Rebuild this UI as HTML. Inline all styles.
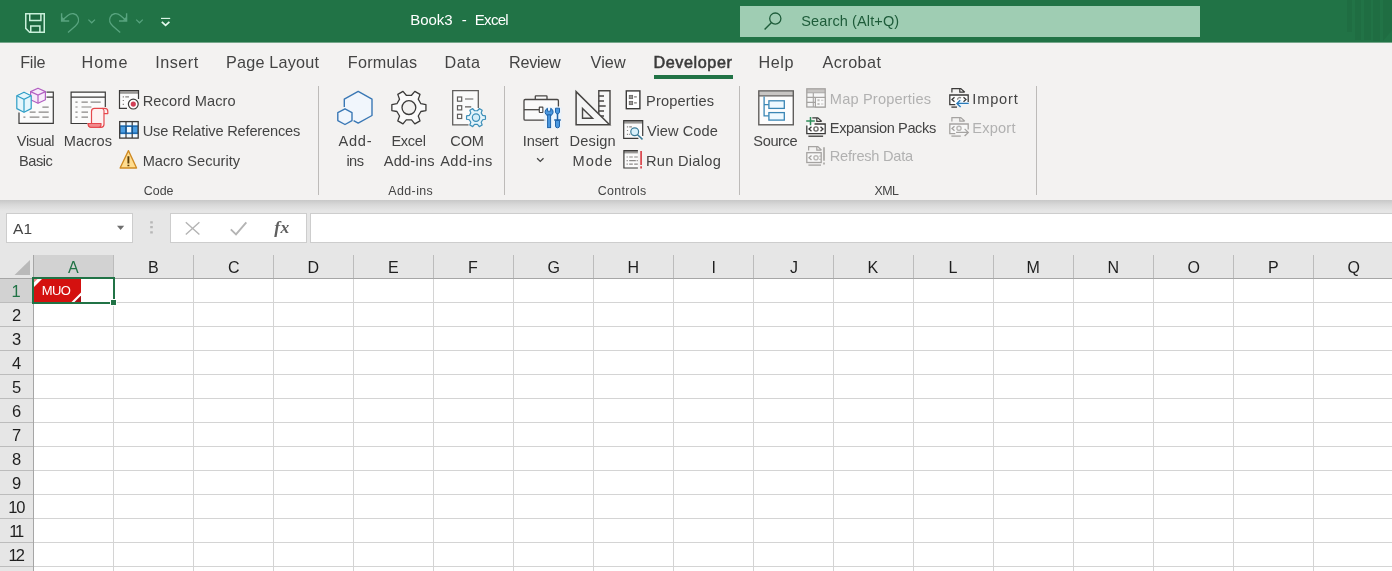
<!DOCTYPE html>
<html lang="en">
<head>
<meta charset="utf-8">
<title>Book3 - Excel</title>
<style>
html,body{margin:0;padding:0;}
body{width:1392px;height:571px;overflow:hidden;position:relative;background:#e6e6e6;font-family:"Liberation Sans",sans-serif;}
.a{position:absolute;}
.t{position:absolute;white-space:pre;line-height:1;}
.i{position:absolute;overflow:visible;}
#title{left:0;top:0;width:1392px;height:42px;background:#217346;}
#search{left:740px;top:6px;width:460px;height:31px;background:#9fcdb3;}
#ribbon{left:0;top:42px;width:1392px;height:158px;background:#f3f2f1;}
#tedge{left:0;top:42px;width:1392px;height:1px;background:#75a68a;}
#shadow{left:0;top:200px;width:1392px;height:11px;background:linear-gradient(#c8c8c8,#d9d9d9 45%,#e6e6e6);}
.sep{position:absolute;top:86px;width:1px;height:109px;background:#bdbbb9;}
#devline{left:654px;top:75px;width:79px;height:4px;background:#217346;}
.box{position:absolute;top:213px;height:28px;background:#fff;border:1px solid #cdcdcd;}
#sheet{left:34px;top:279px;width:1358px;height:292px;background:#fff;}
#grid{left:0;top:254px;}
</style>
</head>
<body>
<div class="a" id="title"></div>
<div class="a" id="search"></div>
<div class="a" id="ribbon"></div>
<div class="a" id="tedge"></div>
<div class="a" id="shadow"></div>
<div class="a" id="devline"></div>
<div class="sep" style="left:318px"></div>
<div class="sep" style="left:504px"></div>
<div class="sep" style="left:739px"></div>
<div class="sep" style="left:1036px"></div>
<div class="box" style="left:6px;width:125px"></div>
<div class="box" style="left:170px;width:135px"></div>
<div class="box" style="left:310px;width:1090px"></div>
<div class="a" id="sheet"></div>
<svg class="a" id="grid" width="1392" height="317" viewBox="0 254 1392 317" shape-rendering="crispEdges">
<rect x="34" y="255" width="79" height="23" fill="#d2d2d2"/>
<rect x="0" y="279" width="33" height="23" fill="#d2d2d2"/>
<rect x="113" y="255" width="1" height="23" fill="#bcbcbc"/>
<rect x="113" y="279" width="1" height="292" fill="#d4d4d4"/>
<rect x="193" y="255" width="1" height="23" fill="#bcbcbc"/>
<rect x="193" y="279" width="1" height="292" fill="#d4d4d4"/>
<rect x="273" y="255" width="1" height="23" fill="#bcbcbc"/>
<rect x="273" y="279" width="1" height="292" fill="#d4d4d4"/>
<rect x="353" y="255" width="1" height="23" fill="#bcbcbc"/>
<rect x="353" y="279" width="1" height="292" fill="#d4d4d4"/>
<rect x="433" y="255" width="1" height="23" fill="#bcbcbc"/>
<rect x="433" y="279" width="1" height="292" fill="#d4d4d4"/>
<rect x="513" y="255" width="1" height="23" fill="#bcbcbc"/>
<rect x="513" y="279" width="1" height="292" fill="#d4d4d4"/>
<rect x="593" y="255" width="1" height="23" fill="#bcbcbc"/>
<rect x="593" y="279" width="1" height="292" fill="#d4d4d4"/>
<rect x="673" y="255" width="1" height="23" fill="#bcbcbc"/>
<rect x="673" y="279" width="1" height="292" fill="#d4d4d4"/>
<rect x="753" y="255" width="1" height="23" fill="#bcbcbc"/>
<rect x="753" y="279" width="1" height="292" fill="#d4d4d4"/>
<rect x="833" y="255" width="1" height="23" fill="#bcbcbc"/>
<rect x="833" y="279" width="1" height="292" fill="#d4d4d4"/>
<rect x="913" y="255" width="1" height="23" fill="#bcbcbc"/>
<rect x="913" y="279" width="1" height="292" fill="#d4d4d4"/>
<rect x="993" y="255" width="1" height="23" fill="#bcbcbc"/>
<rect x="993" y="279" width="1" height="292" fill="#d4d4d4"/>
<rect x="1073" y="255" width="1" height="23" fill="#bcbcbc"/>
<rect x="1073" y="279" width="1" height="292" fill="#d4d4d4"/>
<rect x="1153" y="255" width="1" height="23" fill="#bcbcbc"/>
<rect x="1153" y="279" width="1" height="292" fill="#d4d4d4"/>
<rect x="1233" y="255" width="1" height="23" fill="#bcbcbc"/>
<rect x="1233" y="279" width="1" height="292" fill="#d4d4d4"/>
<rect x="1313" y="255" width="1" height="23" fill="#bcbcbc"/>
<rect x="1313" y="279" width="1" height="292" fill="#d4d4d4"/>
<rect x="1393" y="255" width="1" height="23" fill="#bcbcbc"/>
<rect x="1393" y="279" width="1" height="292" fill="#d4d4d4"/>
<rect x="0" y="302" width="33" height="1" fill="#bcbcbc"/>
<rect x="34" y="302" width="1358" height="1" fill="#d4d4d4"/>
<rect x="0" y="326" width="33" height="1" fill="#bcbcbc"/>
<rect x="34" y="326" width="1358" height="1" fill="#d4d4d4"/>
<rect x="0" y="350" width="33" height="1" fill="#bcbcbc"/>
<rect x="34" y="350" width="1358" height="1" fill="#d4d4d4"/>
<rect x="0" y="374" width="33" height="1" fill="#bcbcbc"/>
<rect x="34" y="374" width="1358" height="1" fill="#d4d4d4"/>
<rect x="0" y="398" width="33" height="1" fill="#bcbcbc"/>
<rect x="34" y="398" width="1358" height="1" fill="#d4d4d4"/>
<rect x="0" y="422" width="33" height="1" fill="#bcbcbc"/>
<rect x="34" y="422" width="1358" height="1" fill="#d4d4d4"/>
<rect x="0" y="446" width="33" height="1" fill="#bcbcbc"/>
<rect x="34" y="446" width="1358" height="1" fill="#d4d4d4"/>
<rect x="0" y="470" width="33" height="1" fill="#bcbcbc"/>
<rect x="34" y="470" width="1358" height="1" fill="#d4d4d4"/>
<rect x="0" y="494" width="33" height="1" fill="#bcbcbc"/>
<rect x="34" y="494" width="1358" height="1" fill="#d4d4d4"/>
<rect x="0" y="518" width="33" height="1" fill="#bcbcbc"/>
<rect x="34" y="518" width="1358" height="1" fill="#d4d4d4"/>
<rect x="0" y="542" width="33" height="1" fill="#bcbcbc"/>
<rect x="34" y="542" width="1358" height="1" fill="#d4d4d4"/>
<rect x="0" y="566" width="33" height="1" fill="#bcbcbc"/>
<rect x="34" y="566" width="1358" height="1" fill="#d4d4d4"/>
<rect x="0" y="278" width="1392" height="1" fill="#a6a6a6"/>
<rect x="33" y="255" width="1" height="316" fill="#a6a6a6"/>
<polygon points="30,260 30,275 14.5,275" fill="#b9b9b9" shape-rendering="auto"/>
<rect x="34" y="277" width="80" height="2" fill="#217346"/>
<rect x="32" y="279" width="2" height="24" fill="#217346"/>
<rect x="34" y="279" width="47" height="23" fill="#d4110f"/>
<g shape-rendering="auto"><polygon points="34,279 42,279 34,287" fill="#fff"/><polygon points="34,279 37.5,279 34,282.5" fill="#e88"/><polygon points="74.5,302 81,302 81,295.5" fill="#a80f14"/><polygon points="71.5,302 74.5,302 81,295.5 81,292.5" fill="#fff"/></g>
<rect x="33" y="278" width="81" height="25" fill="none" stroke="#217346" stroke-width="2"/>
<rect x="110" y="299" width="7" height="7" fill="#fff"/>
<rect x="111" y="300" width="5" height="5" fill="#217346"/>
</svg>
<svg class="i" style="left:24px;top:12px" width="22" height="22" viewBox="24 12 22 22">
<path d="M25.75,13.75H44.25V32.25H29.6L25.75,28.4Z" fill="#1d6840" stroke="#c9f0da" stroke-width="1.5" stroke-linejoin="miter"/>
<path d="M29.75,13.75V20.6H40.9V13.75M30.75,32.25V26.1H39.9V32.25" fill="none" stroke="#c9f0da" stroke-width="1.5"/>
</svg>
<svg class="i" style="left:60px;top:12px" width="36" height="22" viewBox="60 12 36 22">
<path d="M61.6,13.2V21H69.2" fill="none" stroke="#58a47f" stroke-width="1.4"/>
<path d="M61.6,21L62.2,17 65.5,20.6Z" fill="#58a47f"/>
<path d="M62,20.6L67.8,15.4C71.5,12.4 76.4,13.4 78,17.2C79.4,20.6 78,23.6 75.4,26L68,32.6" fill="none" stroke="#58a47f" stroke-width="1.3"/>
<path d="M88.4,19.6L91.7,22.8 95,19.6" fill="none" stroke="#58a47f" stroke-width="1.2"/>
</svg>
<svg class="i" style="left:108px;top:12px" width="36" height="22" viewBox="108 12 36 22">
<path d="M126.6,13.2V21H119" fill="none" stroke="#58a47f" stroke-width="1.4"/>
<path d="M126.6,21L126,17 122.7,20.6Z" fill="#58a47f"/>
<path d="M126.2,20.6L120.4,15.4C116.7,12.4 111.8,13.4 110.2,17.2C108.8,20.6 110.2,23.6 112.8,26L120.2,32.6" fill="none" stroke="#58a47f" stroke-width="1.3"/>
<path d="M136.2,19.6L139.5,22.8 142.8,19.6" fill="none" stroke="#58a47f" stroke-width="1.2"/>
</svg>
<svg class="i" style="left:160px;top:16px" width="12" height="12" viewBox="160 16 12 12">
<path d="M161,18.4H170.2" fill="none" stroke="#e4fbee" stroke-width="1.1"/>
<path d="M161.8,21.8L165.6,25.4 169.4,21.8" fill="none" stroke="#e4fbee" stroke-width="1.7"/>
</svg>
<svg class="i" style="left:763px;top:11px" width="20" height="20" viewBox="763 11 20 20">
<circle cx="775.3" cy="18.6" r="5.6" fill="none" stroke="#1e5c3a" stroke-width="1.3"/>
<path d="M771.3,22.7L764.6,29.6" fill="none" stroke="#1e5c3a" stroke-width="1.4"/>
</svg>
<svg class="i" style="left:14px;top:86px" width="42" height="40" viewBox="14 86 42 40">
<path d="M47,92.2H53.3V123.4H19V113" fill="#fafafa" stroke="none"/>
<rect x="19" y="92.2" width="34.3" height="31.2" fill="#fbfbfb"/>
<path d="M46.5,92.2H53.3V123.4H19V112.5M46.5,97.2H53.3" fill="none" stroke="#3b3a39" stroke-width="1.2"/>
<path d="M42.4,107.1H48.7M29.7,112.2H35.6M38.6,112.2H48.7M23.4,117.1H25.4M29.7,117.1H39.4M42.4,117.1H48.7" fill="none" stroke="#8a8886" stroke-width="1.3"/>
<path d="M38,88.2L45.4,91.6V99.8L38,103.3L30.6,99.8V91.6Z" fill="#f7eafa" stroke="#b25fc2" stroke-width="1.2" stroke-linejoin="round"/>
<path d="M30.6,91.6L38,95L45.4,91.6M38,95V103.3" fill="none" stroke="#b25fc2" stroke-width="1.2"/>
<path d="M24,92.2L31.2,95.8V108.6L24,112.3L16.8,108.6V95.8Z" fill="#e6f6fc" stroke="#2f9ec6" stroke-width="1.2" stroke-linejoin="round"/>
<path d="M16.8,95.8L24,99.4L31.2,95.8M24,99.4V112.3" fill="none" stroke="#2f9ec6" stroke-width="1.2"/>
</svg>
<svg class="i" style="left:68px;top:88px" width="44" height="42" viewBox="68 88 44 42">
<rect x="71.1" y="92.2" width="34.2" height="31.3" fill="#fbfbfb"/>
<path d="M87.5,123.5H71.1V92.2H105.3V107M71.1,97.2H105.3" fill="none" stroke="#3b3a39" stroke-width="1.2"/>
<path d="M75.4,102.1H77.6M81.5,102.1H87.8M90.6,102.1H100.7M75.4,107H77.6M81.5,107H91.4M75.4,112.2H77.6M81.5,112.2H88M75.4,117.2H77.6M81.5,117.2H88" fill="none" stroke="#8a8886" stroke-width="1.2"/>
<path d="M91.5,123.5V111.4Q91.5,108.4 94.5,108.4H104.8Q107.8,108.4 107.8,111.4V113.6H104V124.3Q104,127.3 101,127.3H91Q88.2,127.3 88.2,123.5Z" fill="#fdf1f1" stroke="#e5484d" stroke-width="1.2" stroke-linejoin="round"/>
<path d="M104,113.6V110.8Q104,108.6 102,108.4" fill="none" stroke="#e5484d" stroke-width="1.1"/>
<path d="M88.2,123.5H101V125Q101,127.3 98.5,127.3H91Q88.2,127.3 88.2,123.5Z" fill="#f28a8d" stroke="#e5484d" stroke-width="1.1"/>
</svg>
<svg class="i" style="left:117px;top:88px" width="24" height="24" viewBox="117 88 24 24">
<rect x="119.5" y="90.5" width="19" height="18" fill="#fbfbfb"/>
<rect x="119.5" y="90.8" width="19" height="3" fill="#9a9896"/>
<path d="M127,108.4H119.5V90.5H138.5V99" fill="none" stroke="#3b3a39" stroke-width="1.2"/>
<path d="M122.7,96.8H124M125.3,96.8H129M122.7,100.5H124M122.7,104.3H124" fill="none" stroke="#8a8886" stroke-width="1.2"/>
<circle cx="133.3" cy="104.1" r="4.9" fill="#fff" stroke="#3b3a39" stroke-width="1.2"/>
<circle cx="133.3" cy="104.1" r="2.6" fill="#d13f57"/>
</svg>
<svg class="i" style="left:117px;top:119px" width="24" height="22" viewBox="117 119 24 22">
<rect x="119.7" y="121.6" width="18.5" height="16.5" fill="#f2faff"/>
<rect x="119.7" y="125.3" width="18.5" height="8.8" fill="#1f6db3"/>
<rect x="120.6" y="127" width="4.6" height="5.4" fill="#4b9ee2"/>
<rect x="126.8" y="127" width="4.6" height="5.4" fill="#f2faff"/>
<rect x="133" y="127" width="4.6" height="5.4" fill="#4b9ee2"/>
<path d="M126,121.6V125.3M132.2,121.6V125.3M126,134.1V138.1M132.2,134.1V138.1" fill="none" stroke="#3b3a39" stroke-width="1.2"/>
<path d="M126,125.3V134.1M132.2,125.3V134.1" fill="none" stroke="#1a4c7c" stroke-width="1.2"/>
<rect x="119.7" y="121.6" width="18.5" height="16.5" fill="none" stroke="#3b3a39" stroke-width="1.3"/>
</svg>
<svg class="i" style="left:117px;top:148px" width="24" height="23" viewBox="117 148 24 23">
<path d="M128.45,150.6L136.6,168H120.1Z" fill="#ffdd8f" stroke="#cf8a22" stroke-width="1.3" stroke-linejoin="round"/>
<path d="M128.4,156.3V163.4M128.4,164.7V166.2" fill="none" stroke="#5a3b05" stroke-width="1.9"/>
</svg>
<svg class="i" style="left:335px;top:88px" width="42" height="40" viewBox="335 88 42 40">
<path d="M344.3,106.9V99.1L358.2,91.4L372,99.1V115.5L358.2,123.1L353.6,120.6" fill="#f1f6fc" stroke="#3a78b5" stroke-width="1.4" stroke-linejoin="round"/>
<path d="M345,108.8L352,112.6V120.6L345,124.5L337.8,120.6V112.6Z" fill="#f1f6fc" stroke="#3a78b5" stroke-width="1.4" stroke-linejoin="round"/>
</svg>
<svg class="i" style="left:389px;top:88px" width="40" height="40" viewBox="389 88 40 40">
<path d="M420.88,103.71L425.94,104.60L425.94,110.60L420.88,111.49L418.26,116.03L420.02,120.85L414.82,123.86L411.52,119.92L406.28,119.92L402.98,123.86L397.78,120.85L399.54,116.03L396.92,111.49L391.86,110.60L391.86,104.60L396.92,103.71L399.54,99.17L397.78,94.35L402.98,91.34L406.28,95.28L411.52,95.28L414.82,91.34L420.02,94.35L418.26,99.17Z" fill="#fafafa" stroke="#3b3a39" stroke-width="1.3" stroke-linejoin="round"/>
<circle cx="408.9" cy="107.6" r="6.9" fill="#f1f0ef" stroke="#3b3a39" stroke-width="1.3"/>
</svg>
<svg class="i" style="left:450px;top:88px" width="40" height="42" viewBox="450 88 40 42">
<rect x="452.7" y="90.7" width="25.6" height="34.1" fill="#fafafa"/>
<path d="M468.5,124.8H452.7V90.7H478.3V108" fill="none" stroke="#605e5c" stroke-width="1.3"/>
<rect x="457.5" y="97" width="4.2" height="4.2" fill="#fff" stroke="#605e5c" stroke-width="1.2"/>
<rect x="457.5" y="105.7" width="4.2" height="4.2" fill="#fff" stroke="#605e5c" stroke-width="1.2"/>
<rect x="457.5" y="114.3" width="4.2" height="4.2" fill="#fff" stroke="#605e5c" stroke-width="1.2"/>
<path d="M465,99H473.3M465,106.9H471.2" fill="none" stroke="#605e5c" stroke-width="1.1"/>
<path d="M482.66,115.44L485.45,115.93L485.45,119.27L482.66,119.76L481.20,122.28L482.17,124.95L479.28,126.62L477.46,124.45L474.54,124.45L472.72,126.62L469.83,124.95L470.80,122.28L469.34,119.76L466.55,119.27L466.55,115.93L469.34,115.44L470.80,112.92L469.83,110.25L472.72,108.58L474.54,110.75L477.46,110.75L479.28,108.58L482.17,110.25L481.20,112.92Z" fill="#e4f4fb" stroke="#3d8fb8" stroke-width="1.2" stroke-linejoin="round"/>
<circle cx="476" cy="117.6" r="3.7" fill="#d4edf8" stroke="#3d8fb8" stroke-width="1.2"/>
</svg>
<svg class="i" style="left:521px;top:92px" width="42" height="38" viewBox="521 92 42 38">
<rect x="535.3" y="95.8" width="11.7" height="4" rx="0.6" fill="#fafafa" stroke="#484644" stroke-width="1.3"/>
<rect x="524" y="99.5" width="34.4" height="20.6" rx="1.2" fill="#fafafa" stroke="none"/>
<path d="M545.5,120.1H525.2Q524,120.1 524,118.9V100.7Q524,99.5 525.2,99.5H557.2Q558.4,99.5 558.4,100.7V106.5" fill="none" stroke="#484644" stroke-width="1.3"/>
<path d="M524,109.7H539.1" fill="none" stroke="#484644" stroke-width="1.3"/>
<rect x="539.3" y="107.1" width="3.6" height="5.4" rx="0.5" fill="#fff" stroke="#484644" stroke-width="1.2"/>
<rect x="543.8" y="107" width="17.6" height="21.2" fill="#e6f3ff" opacity="0.7"/>
<path d="M547.5,108.3A4,4 0 1 0 550.7,108.3V111.2H547.5Z" fill="#4a98e0" stroke="#1f63a8" stroke-width="1" stroke-linejoin="round"/>
<rect x="547.6" y="114.8" width="3" height="12.8" fill="#4a98e0" stroke="#1f63a8" stroke-width="1"/>
<path d="M555.5,108.2H559.5V112.2L558.4,113.8H556.6L555.5,112.2Z" fill="#4a98e0" stroke="#1f63a8" stroke-width="1" stroke-linejoin="round"/>
<path d="M557.5,113.8V120M554.2,119.9H560.8" fill="none" stroke="#1f63a8" stroke-width="1.5"/>
<path d="M555.5,120.5H559.5V126Q559.5,127.8 557.5,127.8Q555.5,127.8 555.5,126Z" fill="#4a98e0" stroke="#1f63a8" stroke-width="1"/>
</svg>
<svg class="i" style="left:573px;top:88px" width="40" height="40" viewBox="573 88 40 40">
<path d="M598.8,114.5V90.7H610V124.8" fill="#f7f7f7" stroke="#484644" stroke-width="1.4"/>
<path d="M598.8,96H604M598.8,101H604M598.8,106H605.7M598.8,111H604M598.8,116H604" fill="none" stroke="#484644" stroke-width="1.3"/>
<path d="M576.1,91.6V124.8H609.6Z" fill="#f5f5f5" stroke="#484644" stroke-width="1.5" stroke-linejoin="miter"/>
<path d="M582.5,108.4V118.2H592.6Z" fill="#f3f2f1" stroke="#484644" stroke-width="1.4"/>
</svg>
<svg class="i" style="left:623px;top:88px" width="22" height="24" viewBox="623 88 22 24">
<rect x="626.3" y="90.9" width="13.6" height="17.8" fill="#fff" stroke="#3b3a39" stroke-width="1.4"/>
<rect x="629.3" y="95.4" width="3.3" height="3.2" fill="#9a9896" stroke="#6b6967" stroke-width="0.9"/>
<rect x="629.3" y="101.4" width="3.3" height="3.2" fill="#9a9896" stroke="#6b6967" stroke-width="0.9"/>
<path d="M634.1,96.9H636.8M634.1,102.9H636.8" fill="none" stroke="#7a7876" stroke-width="1.3"/>
</svg>
<svg class="i" style="left:621px;top:118px" width="24" height="24" viewBox="621 118 24 24">
<rect x="623.7" y="120.7" width="19" height="17.6" fill="#fbfbfb"/>
<rect x="623.7" y="121" width="19" height="2.6" fill="#9a9896"/>
<path d="M638.4,138.3H623.7V120.7H642.7V136" fill="none" stroke="#3b3a39" stroke-width="1.2"/>
<path d="M626.9,126.8H628.1M629.2,126.8H631.9M626.9,130.5H628.1M626.9,134.3H628.1M629.2,134.3H630.2" fill="none" stroke="#8a8886" stroke-width="1.2"/>
<circle cx="634.7" cy="131.7" r="3.9" fill="#d9f1fb" stroke="#3a7b97" stroke-width="1.2"/>
<path d="M637.6,134.7L642.5,139.4" fill="none" stroke="#3a7b97" stroke-width="1.5"/>
</svg>
<svg class="i" style="left:621px;top:148px" width="24" height="23" viewBox="621 148 24 23">
<rect x="623.9" y="150.6" width="14" height="17.4" fill="#fbfbfb"/>
<rect x="623.9" y="151" width="14" height="2.4" fill="#9a9896"/>
<path d="M637.9,168H623.9V150.6H637.9" fill="none" stroke="#3b3a39" stroke-width="1.2"/>
<path d="M626.6,157H627.8M629.2,157H632.8M634.2,157H637.8M626.6,160.6H627.8M629.2,160.6H635.8M636.6,160.6H637.8M626.6,164.2H627.8M629.2,164.2H632.8M634.2,164.2H637.8" fill="none" stroke="#8a8886" stroke-width="1.2"/>
<path d="M641.1,151V165M641.1,166.3V168.4" fill="none" stroke="#d9434a" stroke-width="1.7"/>
</svg>
<svg class="i" style="left:535px;top:156px" width="12" height="8" viewBox="535 156 12 8"><path d="M537.1,158.2L540.3,161.4 543.5,158.2" fill="none" stroke="#444" stroke-width="1.3"/></svg>
<svg class="i" style="left:756px;top:88px" width="40" height="40" viewBox="756 88 40 40">
<rect x="758.8" y="90.9" width="34.5" height="33.9" fill="#fdfdfd"/>
<rect x="758.8" y="91.4" width="34.5" height="4.2" fill="#c8c6c4"/>
<path d="M758.8,95.9H793.3" fill="none" stroke="#605e5c" stroke-width="1.1"/>
<rect x="758.8" y="90.9" width="34.5" height="33.9" fill="none" stroke="#605e5c" stroke-width="1.4"/>
<path d="M764.1,96.4V115.9H768.9M764.1,104.6H768.9" fill="none" stroke="#3a86b5" stroke-width="1.3"/>
<rect x="768.9" y="100.8" width="15.4" height="7.6" fill="#eef9ff" stroke="#3a86b5" stroke-width="1.3"/>
<rect x="768.9" y="112.6" width="15.4" height="7.5" fill="#eef9ff" stroke="#3a86b5" stroke-width="1.3"/>
</svg>
<svg class="i" style="left:804px;top:86px" width="24" height="24" viewBox="804 86 24 24">
<rect x="806.8" y="88.8" width="18.4" height="18.2" fill="#f7f7f7"/>
<rect x="806.8" y="88.8" width="18.4" height="3.6" fill="#c6c4c2"/>
<path d="M806.8,92.7H825.2M806.8,97.4H815M806.8,102.4H815M813.3,92.7V107" fill="none" stroke="#a5a3a1" stroke-width="1.1"/>
<rect x="806.8" y="88.8" width="18.4" height="18.2" fill="none" stroke="#a5a3a1" stroke-width="1.3"/>
<rect x="815.4" y="97.4" width="9.8" height="9.6" fill="#fafafa" stroke="#a5a3a1" stroke-width="1.2"/>
<path d="M817.4,99.3H819.6V101.2H817.4ZM817.4,103H819.6V104.9H817.4Z" fill="#c0bebc"/>
<path d="M821,100.3H823.4M821,104H823.4" stroke="#c6c4c2" stroke-width="1.1" fill="none"/>
</svg>
<svg class="i" style="left:804px;top:115px" width="24" height="24" viewBox="804 115 24 24">
<rect x="806.8" y="124" width="18.4" height="9.6" fill="#fdfdfd"/>
<path d="M816.8,117.8V121.4H821.6M812.3,117.8H817.8L821.8,121.4" fill="none" stroke="#3b3a39" stroke-width="1.2"/>
<path d="M814.5,124H825.2V133.6H806.8V125.5" fill="none" stroke="#3b3a39" stroke-width="1.3"/>
<path d="M808.4,136.2H823.1" fill="none" stroke="#3b3a39" stroke-width="1.3"/>
<path d="M811.5,126.7L809,129 811.5,131.3M820.5,126.7L823,129 820.5,131.3" fill="none" stroke="#3b3a39" stroke-width="1.3"/>
<circle cx="816" cy="129" r="2.1" fill="#fff" stroke="#6b6967" stroke-width="1.4"/>
<path d="M806.2,121.1H814.8M810.5,117.1V125.3" fill="none" stroke="#2f8d5b" stroke-width="1.5"/>
</svg>
<svg class="i" style="left:804px;top:144px" width="24" height="24" viewBox="804 144 24 24">
<rect x="806.8" y="152.7" width="14.4" height="9.8" fill="#f8f8f8"/>
<path d="M808.6,150.6V146.6H817.8L821.5,150.2M816.8,146.6V150.2H821.3" fill="none" stroke="#a5a3a1" stroke-width="1.2"/>
<rect x="806.8" y="152.7" width="14.4" height="9.8" fill="none" stroke="#a5a3a1" stroke-width="1.3"/>
<path d="M808.4,165.1H821" fill="none" stroke="#a5a3a1" stroke-width="1.3"/>
<path d="M811.5,155.5L809,157.8 811.5,160.1" fill="none" stroke="#a5a3a1" stroke-width="1.3"/>
<circle cx="816" cy="157.8" r="2.1" fill="none" stroke="#bab8b6" stroke-width="1.4"/>
<path d="M820,155.6V156.8M820,158.8V160" stroke="#a5a3a1" stroke-width="1.1" fill="none"/>
<path d="M824,147.3V160.7M824,162.6V164.6" fill="none" stroke="#a5a3a1" stroke-width="1.6"/>
</svg>
<svg class="i" style="left:947px;top:86px" width="24" height="24" viewBox="947 86 24 24">
<rect x="949.8" y="95" width="18.4" height="9.6" fill="#fdfdfd"/>
<path d="M951.9,92.6V88.6H960.8L964.8,92.2M959.8,88.6V92.2H964.6" fill="none" stroke="#3b3a39" stroke-width="1.2"/>
<path d="M955.3,104.6H949.8V95H968.2V102" fill="none" stroke="#3b3a39" stroke-width="1.3"/>
<path d="M951.4,107.1H957" fill="none" stroke="#3b3a39" stroke-width="1.3"/>
<path d="M954.5,97.2L952,99.5 954.5,101.8M963.5,97.2L966,99.5 963.5,101.8" fill="none" stroke="#3b3a39" stroke-width="1.3"/>
<path d="M957.6,99.8A2.1,2.1 0 0 1 961,98" fill="none" stroke="#8a8886" stroke-width="1.3"/>
<path d="M956,103.4L960.4,99.2L962.3,101 961,102.3H969V104.5H961L962.3,105.8 960.4,107.6Z" fill="#dff0fc" opacity="0.8"/>
<path d="M968.7,103.4H957.2M960.2,100.2L956.9,103.4 960.6,107" fill="none" stroke="#2a7ab8" stroke-width="1.3"/>
</svg>
<svg class="i" style="left:947px;top:115px" width="24" height="24" viewBox="947 115 24 24">
<rect x="949.8" y="124" width="18.4" height="9.6" fill="#f8f8f8"/>
<path d="M951.9,121.6V117.6H960.8L964.8,121.2M959.8,117.6V121.2H964.6" fill="none" stroke="#a5a3a1" stroke-width="1.2"/>
<path d="M955.3,133.6H949.8V124H968.2V129.5" fill="none" stroke="#a5a3a1" stroke-width="1.3"/>
<path d="M951.4,136.1H960.8" fill="none" stroke="#a5a3a1" stroke-width="1.3"/>
<path d="M954.5,126.2L952,128.5 954.5,130.8" fill="none" stroke="#a5a3a1" stroke-width="1.3"/>
<circle cx="959" cy="128.3" r="2.1" fill="none" stroke="#bab8b6" stroke-width="1.4"/>
<path d="M956.1,132.4H968M964.6,128.9L968.3,132.4 964.6,136" fill="none" stroke="#a5a3a1" stroke-width="1.3"/>
</svg>
<svg class="i" style="left:116px;top:224px" width="10" height="8" viewBox="116 224 10 8"><path d="M117,225.8H124.2L120.6,230.1Z" fill="#6e6e6e"/></svg>
<svg class="i" style="left:149px;top:220px" width="5" height="15" viewBox="149 220 5 15"><path d="M150.2,221.3h2.6v2.2h-2.6zM150.2,226h2.6v2.2h-2.6zM150.2,231.3h2.6v2.2h-2.6z" fill="#b7b7b7"/></svg>
<svg class="i" style="left:184px;top:220px" width="17" height="17" viewBox="184 220 17 17"><path d="M185.8,222.2L199.4,234.6M199.4,222.2L185.8,234.6" fill="none" stroke="#b4b4b4" stroke-width="1.4"/></svg>
<svg class="i" style="left:229px;top:220px" width="19" height="17" viewBox="229 220 19 17"><path d="M230.8,229.4L236,234.4L246.3,222.3" fill="none" stroke="#b4b4b4" stroke-width="1.9"/></svg>
<svg class="i" style="left:1340px;top:0px" width="52" height="43" viewBox="1340 0 52 43">
<rect x="1347" y="0" width="5" height="32" fill="#1f6b41" opacity="0.75"/>
<rect x="1355" y="0" width="6" height="40" fill="#1f6b41" opacity="0.75"/>
<rect x="1364" y="0" width="7" height="40" fill="#1f6b41" opacity="0.75"/>
<rect x="1373" y="0" width="7" height="41" fill="#1f6b41" opacity="0.75"/>
<path d="M1383,0H1392V30L1383,41Z" fill="#1f6b41" opacity="0.75"/>
</svg>
<div class="a" id="tx" style="left:0;top:0;width:1392px;height:571px;will-change:transform">
<span class="t" style="left:410.30px;top:12.05px;font-size:15px;color:#fff;letter-spacing:-0.047px;">Book3</span>
<span class="t" style="left:461.70px;top:12.05px;font-size:15px;color:#fff;">-</span>
<span class="t" style="left:474.80px;top:12.05px;font-size:15px;color:#fff;letter-spacing:-0.712px;">Excel</span>
<span class="t" style="left:801.30px;top:14.48px;font-size:14.5px;color:#1e5c3a;letter-spacing:0.118px;">Search (Alt+Q)</span>
<span class="t" style="left:20.25px;top:54.04px;font-size:16.2px;color:#444;letter-spacing:-0.277px;">File</span>
<span class="t" style="left:81.50px;top:54.04px;font-size:16.2px;color:#444;letter-spacing:0.941px;">Home</span>
<span class="t" style="left:155.25px;top:54.04px;font-size:16.2px;color:#444;letter-spacing:0.503px;">Insert</span>
<span class="t" style="left:226.00px;top:54.04px;font-size:16.2px;color:#444;letter-spacing:0.209px;">Page Layout</span>
<span class="t" style="left:347.75px;top:54.04px;font-size:16.2px;color:#444;letter-spacing:0.269px;">Formulas</span>
<span class="t" style="left:444.50px;top:54.04px;font-size:16.2px;color:#444;letter-spacing:0.437px;">Data</span>
<span class="t" style="left:509.00px;top:54.04px;font-size:16.2px;color:#444;letter-spacing:-0.277px;">Review</span>
<span class="t" style="left:590.50px;top:54.04px;font-size:16.2px;color:#444;letter-spacing:0.132px;">View</span>
<span class="t" style="left:758.50px;top:54.04px;font-size:16.2px;color:#444;letter-spacing:0.570px;">Help</span>
<span class="t" style="left:822.50px;top:54.04px;font-size:16.2px;color:#444;letter-spacing:0.452px;">Acrobat</span>
<span class="t" style="left:653.50px;top:54.04px;font-size:16.2px;color:#3b3b3b;letter-spacing:0.576px;-webkit-text-stroke:0.55px #3b3b3b;">Developer</span>
<span class="t" style="left:16.80px;top:133.79px;font-size:14.6px;color:#444;letter-spacing:-0.368px;">Visual</span>
<span class="t" style="left:19.00px;top:153.89px;font-size:14.6px;color:#444;letter-spacing:-0.472px;">Basic</span>
<span class="t" style="left:63.70px;top:133.79px;font-size:14.6px;color:#444;letter-spacing:0.111px;">Macros</span>
<span class="t" style="left:338.40px;top:133.79px;font-size:14.6px;color:#444;letter-spacing:0.778px;">Add-</span>
<span class="t" style="left:346.40px;top:153.89px;font-size:14.6px;color:#444;letter-spacing:-0.529px;">ins</span>
<span class="t" style="left:391.40px;top:133.79px;font-size:14.6px;color:#444;letter-spacing:-0.286px;">Excel</span>
<span class="t" style="left:383.70px;top:153.89px;font-size:14.6px;color:#444;letter-spacing:0.236px;">Add-ins</span>
<span class="t" style="left:450.30px;top:133.79px;font-size:14.6px;color:#444;letter-spacing:-0.195px;">COM</span>
<span class="t" style="left:440.20px;top:153.89px;font-size:14.6px;color:#444;letter-spacing:0.436px;">Add-ins</span>
<span class="t" style="left:522.70px;top:133.79px;font-size:14.6px;color:#444;letter-spacing:-0.109px;">Insert</span>
<span class="t" style="left:569.60px;top:133.79px;font-size:14.6px;color:#444;letter-spacing:0.138px;">Design</span>
<span class="t" style="left:572.60px;top:153.89px;font-size:14.6px;color:#444;letter-spacing:1.004px;">Mode</span>
<span class="t" style="left:753.30px;top:133.79px;font-size:14.6px;color:#444;letter-spacing:-0.385px;">Source</span>
<span class="t" style="left:142.70px;top:93.69px;font-size:14.6px;color:#444;letter-spacing:0.125px;">Record Macro</span>
<span class="t" style="left:142.70px;top:123.69px;font-size:14.6px;color:#444;letter-spacing:-0.174px;">Use Relative References</span>
<span class="t" style="left:142.70px;top:153.69px;font-size:14.6px;color:#444;">Macro Security</span>
<span class="t" style="left:646.00px;top:93.69px;font-size:14.6px;color:#444;letter-spacing:0.176px;">Properties</span>
<span class="t" style="left:647.00px;top:123.69px;font-size:14.6px;color:#444;letter-spacing:0.063px;">View Code</span>
<span class="t" style="left:646.00px;top:153.69px;font-size:14.6px;color:#444;letter-spacing:0.291px;">Run Dialog</span>
<span class="t" style="left:829.80px;top:91.79px;font-size:14.6px;color:#b1b1b1;letter-spacing:0.180px;">Map Properties</span>
<span class="t" style="left:829.80px;top:120.69px;font-size:14.6px;color:#444;letter-spacing:-0.396px;">Expansion Packs</span>
<span class="t" style="left:829.80px;top:148.69px;font-size:14.6px;color:#b1b1b1;letter-spacing:-0.242px;">Refresh Data</span>
<span class="t" style="left:972.30px;top:91.79px;font-size:14.6px;color:#444;letter-spacing:0.819px;">Import</span>
<span class="t" style="left:972.30px;top:120.69px;font-size:14.6px;color:#b1b1b1;letter-spacing:0.195px;">Export</span>
<span class="t" style="left:143.70px;top:184.65px;font-size:12.4px;color:#444;letter-spacing:0.057px;">Code</span>
<span class="t" style="left:388.30px;top:184.65px;font-size:12.4px;color:#444;letter-spacing:0.414px;">Add-ins</span>
<span class="t" style="left:597.70px;top:184.65px;font-size:12.4px;color:#444;letter-spacing:0.337px;">Controls</span>
<span class="t" style="left:874.50px;top:184.65px;font-size:12.4px;color:#444;letter-spacing:-0.543px;">XML</span>
<span class="t" style="left:41.80px;top:283.55px;font-size:13px;color:#fff;letter-spacing:-0.609px;">MUO</span>
<span class="t" style="left:274.20px;top:218.54px;font-size:17.5px;color:#5e5e5e;letter-spacing:0.572px;font-weight:700;font-style:italic;font-family:'Liberation Serif', serif;">fx</span>
<span class="t" style="left:13.00px;top:220.93px;font-size:15.5px;color:#444;letter-spacing:0.162px;">A1</span>
<span class="t" style="left:68.00px;top:260.41px;font-size:16px;color:#217346;">A</span>
<span class="t" style="left:148.00px;top:260.41px;font-size:16px;color:#1f1f1f;">B</span>
<span class="t" style="left:228.00px;top:260.41px;font-size:16px;color:#1f1f1f;">C</span>
<span class="t" style="left:307.50px;top:260.41px;font-size:16px;color:#1f1f1f;">D</span>
<span class="t" style="left:388.00px;top:260.41px;font-size:16px;color:#1f1f1f;">E</span>
<span class="t" style="left:468.00px;top:260.41px;font-size:16px;color:#1f1f1f;">F</span>
<span class="t" style="left:547.50px;top:260.41px;font-size:16px;color:#1f1f1f;">G</span>
<span class="t" style="left:627.50px;top:260.41px;font-size:16px;color:#1f1f1f;">H</span>
<span class="t" style="left:711.50px;top:260.41px;font-size:16px;color:#1f1f1f;">I</span>
<span class="t" style="left:790.00px;top:260.41px;font-size:16px;color:#1f1f1f;">J</span>
<span class="t" style="left:867.50px;top:260.41px;font-size:16px;color:#1f1f1f;">K</span>
<span class="t" style="left:948.50px;top:260.41px;font-size:16px;color:#1f1f1f;">L</span>
<span class="t" style="left:1026.50px;top:260.41px;font-size:16px;color:#1f1f1f;">M</span>
<span class="t" style="left:1107.50px;top:260.41px;font-size:16px;color:#1f1f1f;">N</span>
<span class="t" style="left:1187.50px;top:260.41px;font-size:16px;color:#1f1f1f;">O</span>
<span class="t" style="left:1268.00px;top:260.41px;font-size:16px;color:#1f1f1f;">P</span>
<span class="t" style="left:1347.50px;top:260.41px;font-size:16px;color:#1f1f1f;">Q</span>
<span class="t" style="left:11.60px;top:282.98px;font-size:16.5px;color:#217346;">1</span>
<span class="t" style="left:12.10px;top:306.98px;font-size:16.5px;color:#1f1f1f;">2</span>
<span class="t" style="left:12.10px;top:330.98px;font-size:16.5px;color:#1f1f1f;">3</span>
<span class="t" style="left:12.10px;top:354.98px;font-size:16.5px;color:#1f1f1f;">4</span>
<span class="t" style="left:12.10px;top:378.98px;font-size:16.5px;color:#1f1f1f;">5</span>
<span class="t" style="left:12.10px;top:402.98px;font-size:16.5px;color:#1f1f1f;">6</span>
<span class="t" style="left:12.10px;top:426.98px;font-size:16.5px;color:#1f1f1f;">7</span>
<span class="t" style="left:12.10px;top:450.98px;font-size:16.5px;color:#1f1f1f;">8</span>
<span class="t" style="left:12.10px;top:474.98px;font-size:16.5px;color:#1f1f1f;">9</span>
<span class="t" style="left:8.30px;top:498.98px;font-size:16.5px;color:#1f1f1f;letter-spacing:-1.277px;">10</span>
<span class="t" style="left:9.20px;top:522.98px;font-size:16.5px;color:#1f1f1f;letter-spacing:-2.152px;">11</span>
<span class="t" style="left:8.60px;top:546.98px;font-size:16.5px;color:#1f1f1f;letter-spacing:-1.977px;">12</span>
</div>
</body>
</html>
